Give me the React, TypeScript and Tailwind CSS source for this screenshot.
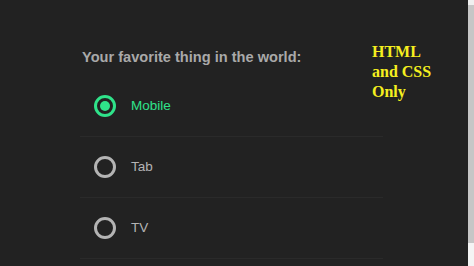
import { useState } from "react";

const options = ["Mobile", "Tab", "TV"];

export default function App() {
  const [selected, setSelected] = useState("Mobile");

  return (
    <div className="flex h-[266px] w-full overflow-hidden bg-[#222222] font-['Liberation_Sans',Arial,sans-serif]">
      <div className="relative flex-1">
        {/* annotation overlay */}
        <div className="absolute left-[372px] top-[42px] font-['Liberation_Serif',serif] text-[16px] font-bold leading-[20px] text-[#f5ef1f]">
          HTML
          <br />
          and CSS
          <br />
          Only
        </div>

        <div className="ml-[80px] w-[303px] pt-[47px]">
          <h1 className="pl-[2px] text-[14.6px] font-bold leading-[20px] text-[#a9a9a9]">
            Your favorite thing in the world:
          </h1>

          <ul className="mt-[9px]">
            {options.map((opt) => {
              const active = opt === selected;
              return (
                <li
                  key={opt}
                  onClick={() => setSelected(opt)}
                  className="flex h-[61px] cursor-pointer items-center gap-[15px] border-b border-[#2a2a2a] pl-[14px]"
                >
                  <span
                    className={
                      active
                        ? "flex h-[22px] w-[22px] items-center justify-center rounded-full border-[3px] border-[#2fe38a]"
                        : "flex h-[22px] w-[22px] items-center justify-center rounded-full border-[3px] border-[#b4b4b4]"
                    }
                  >
                    {active && <span className="h-[10px] w-[10px] rounded-full bg-[#2fe38a]" />}
                  </span>
                  <span
                    className={
                      active ? "text-[13.5px] text-[#2fe38a]" : "text-[13.5px] text-[#b4b4b4]"
                    }
                  >
                    {opt}
                  </span>
                </li>
              );
            })}
          </ul>
        </div>
      </div>

      {/* scrollbar */}
      <div className="flex w-[6px] flex-col bg-[#f4f4f4]">
        <div className="h-[5px] bg-[#f0f0f0]" />
        <div className="h-[238px] bg-[#c6c6c6]" />
      </div>
    </div>
  );
}
